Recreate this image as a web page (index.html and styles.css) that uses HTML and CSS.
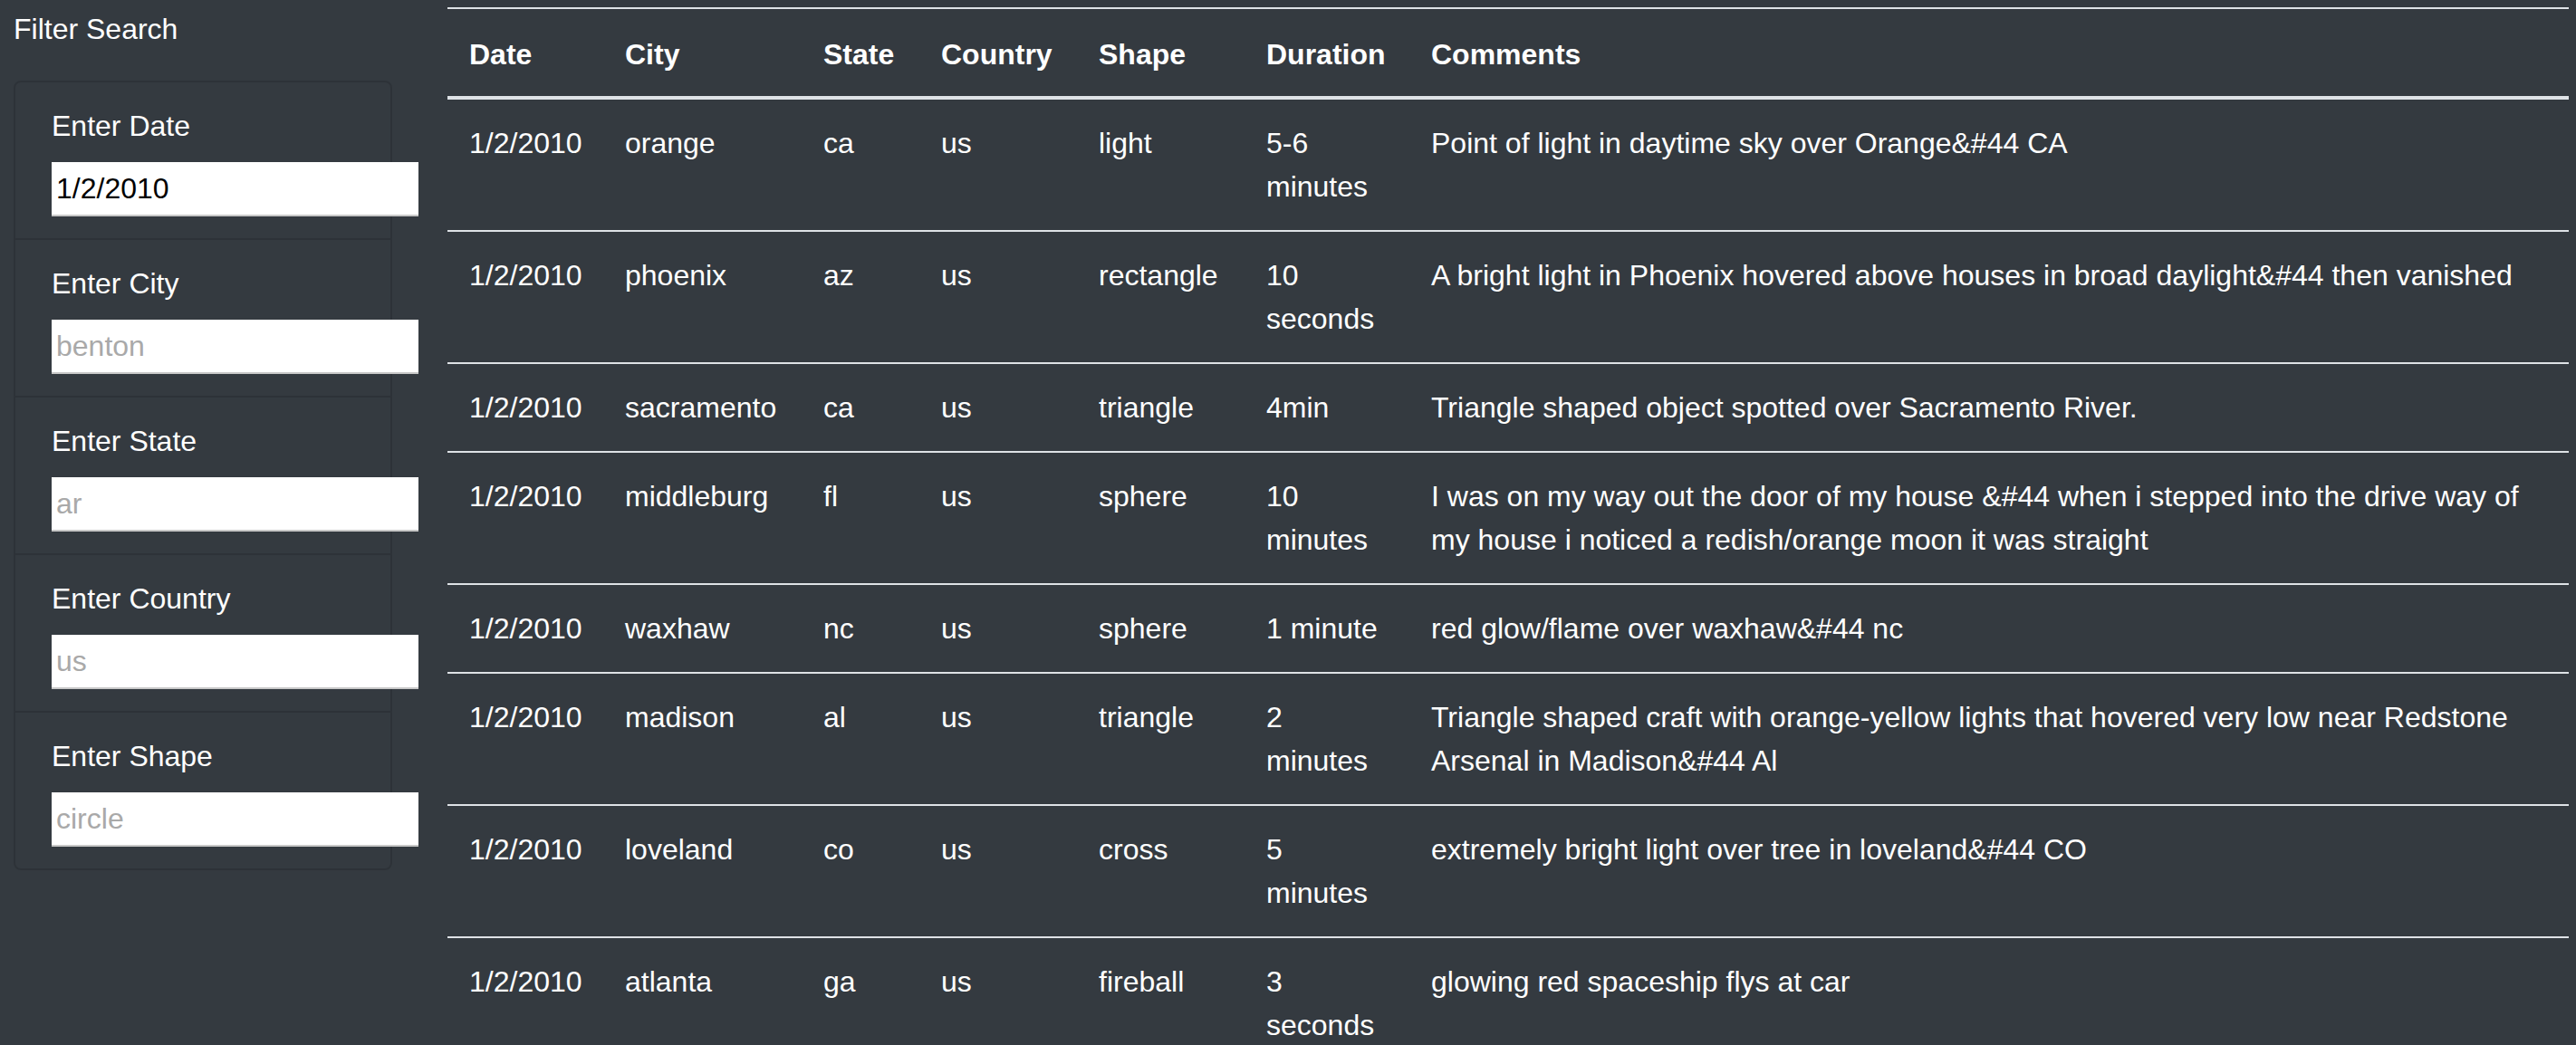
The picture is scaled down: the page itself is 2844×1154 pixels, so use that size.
FILE: index.html
```html
<!DOCTYPE html>
<html lang="en">
<head>
    <meta charset="UTF-8">
    <meta name="viewport" content="width=device-width, initial-scale=1.0">
    <title>UFO Sightings</title>
    <link rel="stylesheet" href="styles.css">
</head>
<body>
    <div class="page">
        <aside class="filters">
            <p class="filters-title">Filter Search</p>
            <ul class="filter-list">
                <li class="filter-item">
                    <label for="datetime">Enter Date</label>
                    <input type="text" id="datetime" value="1/2/2010">
                </li>
                <li class="filter-item">
                    <label for="city">Enter City</label>
                    <input type="text" id="city" placeholder="benton">
                </li>
                <li class="filter-item">
                    <label for="state">Enter State</label>
                    <input type="text" id="state" placeholder="ar">
                </li>
                <li class="filter-item">
                    <label for="country">Enter Country</label>
                    <input type="text" id="country" placeholder="us">
                </li>
                <li class="filter-item">
                    <label for="shape">Enter Shape</label>
                    <input type="text" id="shape" placeholder="circle">
                </li>
            </ul>
        </aside>

        <main class="results">
            <table class="ufo-table">
                <colgroup>
                    <col class="col-date">
                    <col class="col-city">
                    <col class="col-state">
                    <col class="col-country">
                    <col class="col-shape">
                    <col class="col-duration">
                    <col>
                </colgroup>
                <thead>
                    <tr>
                        <th>Date</th>
                        <th>City</th>
                        <th>State</th>
                        <th>Country</th>
                        <th>Shape</th>
                        <th>Duration</th>
                        <th>Comments</th>
                    </tr>
                </thead>
                <tbody>
                    <tr>
                        <td>1/2/2010</td><td>orange</td><td>ca</td><td>us</td><td>light</td><td>5-6 minutes</td>
                        <td>Point of light in daytime sky over Orange&amp;#44 CA</td>
                    </tr>
                    <tr>
                        <td>1/2/2010</td><td>phoenix</td><td>az</td><td>us</td><td>rectangle</td><td>10 seconds</td>
                        <td>A bright light in Phoenix hovered above houses in broad daylight&amp;#44 then vanished</td>
                    </tr>
                    <tr>
                        <td>1/2/2010</td><td>sacramento</td><td>ca</td><td>us</td><td>triangle</td><td>4min</td>
                        <td>Triangle shaped object spotted over Sacramento River.</td>
                    </tr>
                    <tr>
                        <td>1/2/2010</td><td>middleburg</td><td>fl</td><td>us</td><td>sphere</td><td>10 minutes</td>
                        <td>I was on my way out the door of my house &amp;#44 when i stepped into the drive way of my house i noticed a redish/orange moon it was straight</td>
                    </tr>
                    <tr>
                        <td>1/2/2010</td><td>waxhaw</td><td>nc</td><td>us</td><td>sphere</td><td>1 minute</td>
                        <td>red glow/flame over waxhaw&amp;#44 nc</td>
                    </tr>
                    <tr>
                        <td>1/2/2010</td><td>madison</td><td>al</td><td>us</td><td>triangle</td><td>2 minutes</td>
                        <td>Triangle shaped craft with orange-yellow lights that hovered very low near Redstone Arsenal in Madison&amp;#44 Al</td>
                    </tr>
                    <tr>
                        <td>1/2/2010</td><td>loveland</td><td>co</td><td>us</td><td>cross</td><td>5 minutes</td>
                        <td>extremely bright light over tree in loveland&amp;#44 CO</td>
                    </tr>
                    <tr>
                        <td>1/2/2010</td><td>atlanta</td><td>ga</td><td>us</td><td>fireball</td><td>3 seconds</td>
                        <td>glowing red spaceship flys at car</td>
                    </tr>
                </tbody>
            </table>
        </main>
    </div>
</body>
</html>
```

FILE: styles.css
```css
body {
    margin: 0;
    background-color: #343a40;
    color: #fff;
    font-family: "Liberation Sans", Arial, sans-serif;
    font-size: 32px;
    line-height: 1.5;
}
.page {
    display: flex;
    align-items: flex-start;
    gap: 61px;
    padding: 8px 8px 0 15px;
}
.filters {
    flex: none;
    width: 418px;
}
.filters-title {
    margin: 0 0 33px;
}
.filter-list {
    list-style: none;
    margin: 0;
    padding: 0;
    border: 2px solid rgba(0, 0, 0, 0.125);
    border-radius: 8px;
}
.filter-item {
    padding: 24px 40px;
    border-top: 2px solid rgba(0, 0, 0, 0.125);
}
.filter-item:first-child {
    border-top: none;
}
.filter-item label {
    display: block;
    margin-bottom: 16px;
}
.filter-item input {
    display: block;
    box-sizing: border-box;
    width: 405px;
    height: 60px;
    margin: 0;
    padding: 0 5px;
    border: none;
    border-bottom: 2px solid #c8c8c8;
    border-radius: 0;
    background-color: #fff;
    color: #000;
    font-family: inherit;
    font-size: 32px;
    outline: none;
}
.filter-item input::placeholder {
    color: #a9a9a9;
}
.results {
    flex: 1;
    min-width: 0;
}
.ufo-table {
    width: 100%;
    border-collapse: collapse;
    table-layout: fixed;
}
.col-date { width: 172px; }
.col-city { width: 219px; }
.col-state { width: 130px; }
.col-country { width: 174px; }
.col-shape { width: 185px; }
.col-duration { width: 182px; }
.ufo-table th,
.ufo-table td {
    padding: 24px;
    text-align: left;
    vertical-align: top;
    border-top: 2px solid #dee2e6;
}
.ufo-table thead th {
    padding-top: 26px;
    padding-bottom: 22px;
    font-weight: bold;
    border-bottom: 4px solid #dee2e6;
}
```
